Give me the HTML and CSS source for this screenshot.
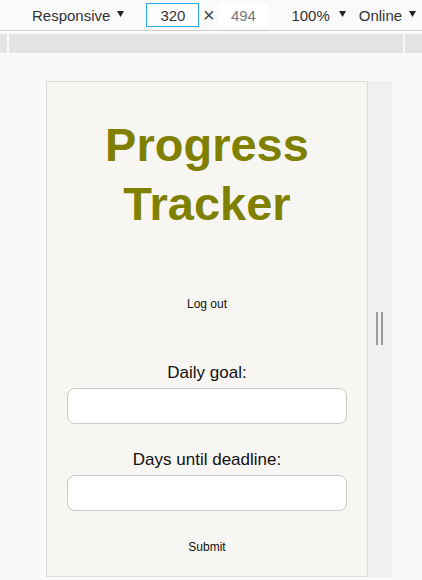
FILE: index.html
```html
<!DOCTYPE html>
<html>
<head>
<meta charset="utf-8">
<link rel="stylesheet" href="styles.css">
</head>
<body>
<div class="toolbar">
  <span class="tb-item tb-responsive">Responsive</span>
  <svg class="caret" width="7" height="6" viewBox="0 0 7 6"><path d="M0 0H7L3.5 6Z" fill="#222"/></svg>
  <span class="dim dim-w">320</span>
  <span class="times">×</span>
  <span class="dim dim-h">494</span>
  <span class="tb-item tb-zoom">100%</span>
  <svg class="caret" width="7" height="6" viewBox="0 0 7 6"><path d="M0 0H7L3.5 6Z" fill="#222"/></svg>
  <span class="tb-item tb-online">Online</span>
  <svg class="caret" width="7" height="6" viewBox="0 0 7 6"><path d="M0 0H7L3.5 6Z" fill="#222"/></svg>
</div>
<div class="ruler">
  <div class="ruler-seg ruler-a"></div>
  <div class="ruler-seg ruler-b"></div>
  <div class="ruler-seg ruler-c"></div>
</div>
<div class="stage">
  <div class="device">
    <h1 class="title">Progress Tracker</h1>
    <button class="link-btn logout">Log out</button>
    <label class="field-label first">Daily goal:</label>
    <input class="field" type="text">
    <label class="field-label second">Days until deadline:</label>
    <input class="field" type="text">
    <button class="link-btn submit">Submit</button>
  </div>
  <div class="handle">
    <div class="grip"><span></span><span></span></div>
  </div>
</div>
</body>
</html>
```

FILE: styles.css
```css
html, body {
  margin: 0;
  padding: 0;
}
body {
  width: 422px;
  height: 580px;
  overflow: hidden;
  background: #f9f9f9;
  font-family: "Liberation Sans", Arial, sans-serif;
  color: #222;
}
.toolbar {
  height: 31px;
  background: #fafafa;
  border-bottom: 1px solid #cfcfcf;
  display: flex;
  align-items: center;
  font-size: 15px;
  color: #333;
  box-sizing: border-box;
}
.tb-responsive { margin-left: 32px; }
.caret {
  margin-left: 7px;
  margin-top: -3px;
  flex: none;
}
.dim {
  box-sizing: border-box;
  height: 24px;
  width: 50px;
  display: flex;
  align-items: center;
  justify-content: center;
  background: #fff;
}
.dim-w {
  margin-left: 22px;
  border: 1px solid #2ea8f2;
  color: #333;
  width: 53px;
}
.times {
  width: 19px;
  text-align: center;
  font-size: 20px;
  line-height: 20px;
  color: #444;
}
.dim-h {
  color: #777;
}
.tb-zoom { margin-left: 23px; }
.tb-zoom + .caret { margin-left: 9px; }
.tb-online { margin-left: 13px; }

.ruler {
  display: flex;
  height: 19px;
  margin-top: 3px;
  gap: 2px;
}
.ruler-seg { background: #e3e3e3; height: 100%; }
.ruler-a { width: 7px; }
.ruler-b { width: 394px; }
.ruler-c { flex: 1; }

.stage {
  display: flex;
  margin-top: 28px;
  padding-left: 46px;
}
.device {
  box-sizing: border-box;
  width: 322px;
  height: 496px;
  border: 1px solid #dcdcdc;
  background: #f7f6f3;
  display: flex;
  flex-direction: column;
  align-items: center;
}
.title {
  margin: 33px 0 0;
  width: 260px;
  text-align: center;
  font-size: 47px;
  line-height: 59px;
  font-weight: 700;
  color: #808000;
}
.link-btn {
  border: none;
  background: transparent;
  padding: 0;
  font-family: "Liberation Sans", Arial, sans-serif;
  font-size: 12px;
  line-height: 14px;
  color: #111;
}
.logout { margin-top: 64px; }
.field-label {
  font-size: 17px;
  line-height: 20px;
  color: #111;
}
.field-label.first { margin-top: 52px; }
.field-label.second { margin-top: 26px; }
.field {
  box-sizing: border-box;
  margin-top: 5px;
  width: 280px;
  height: 36px;
  border: 1px solid #c9c9c9;
  border-radius: 8px;
  background: #fff;
  outline: none;
}
.submit { margin-top: 29px; }

.handle {
  width: 24px;
  height: 496px;
  background: #f1f1f1;
  display: flex;
  align-items: flex-start;
  justify-content: flex-start;
}
.grip {
  margin-top: 231px;
  margin-left: 8px;
  display: flex;
  gap: 3px;
}
.grip span {
  width: 2px;
  height: 33px;
  background: #9a9a9a;
}
```
